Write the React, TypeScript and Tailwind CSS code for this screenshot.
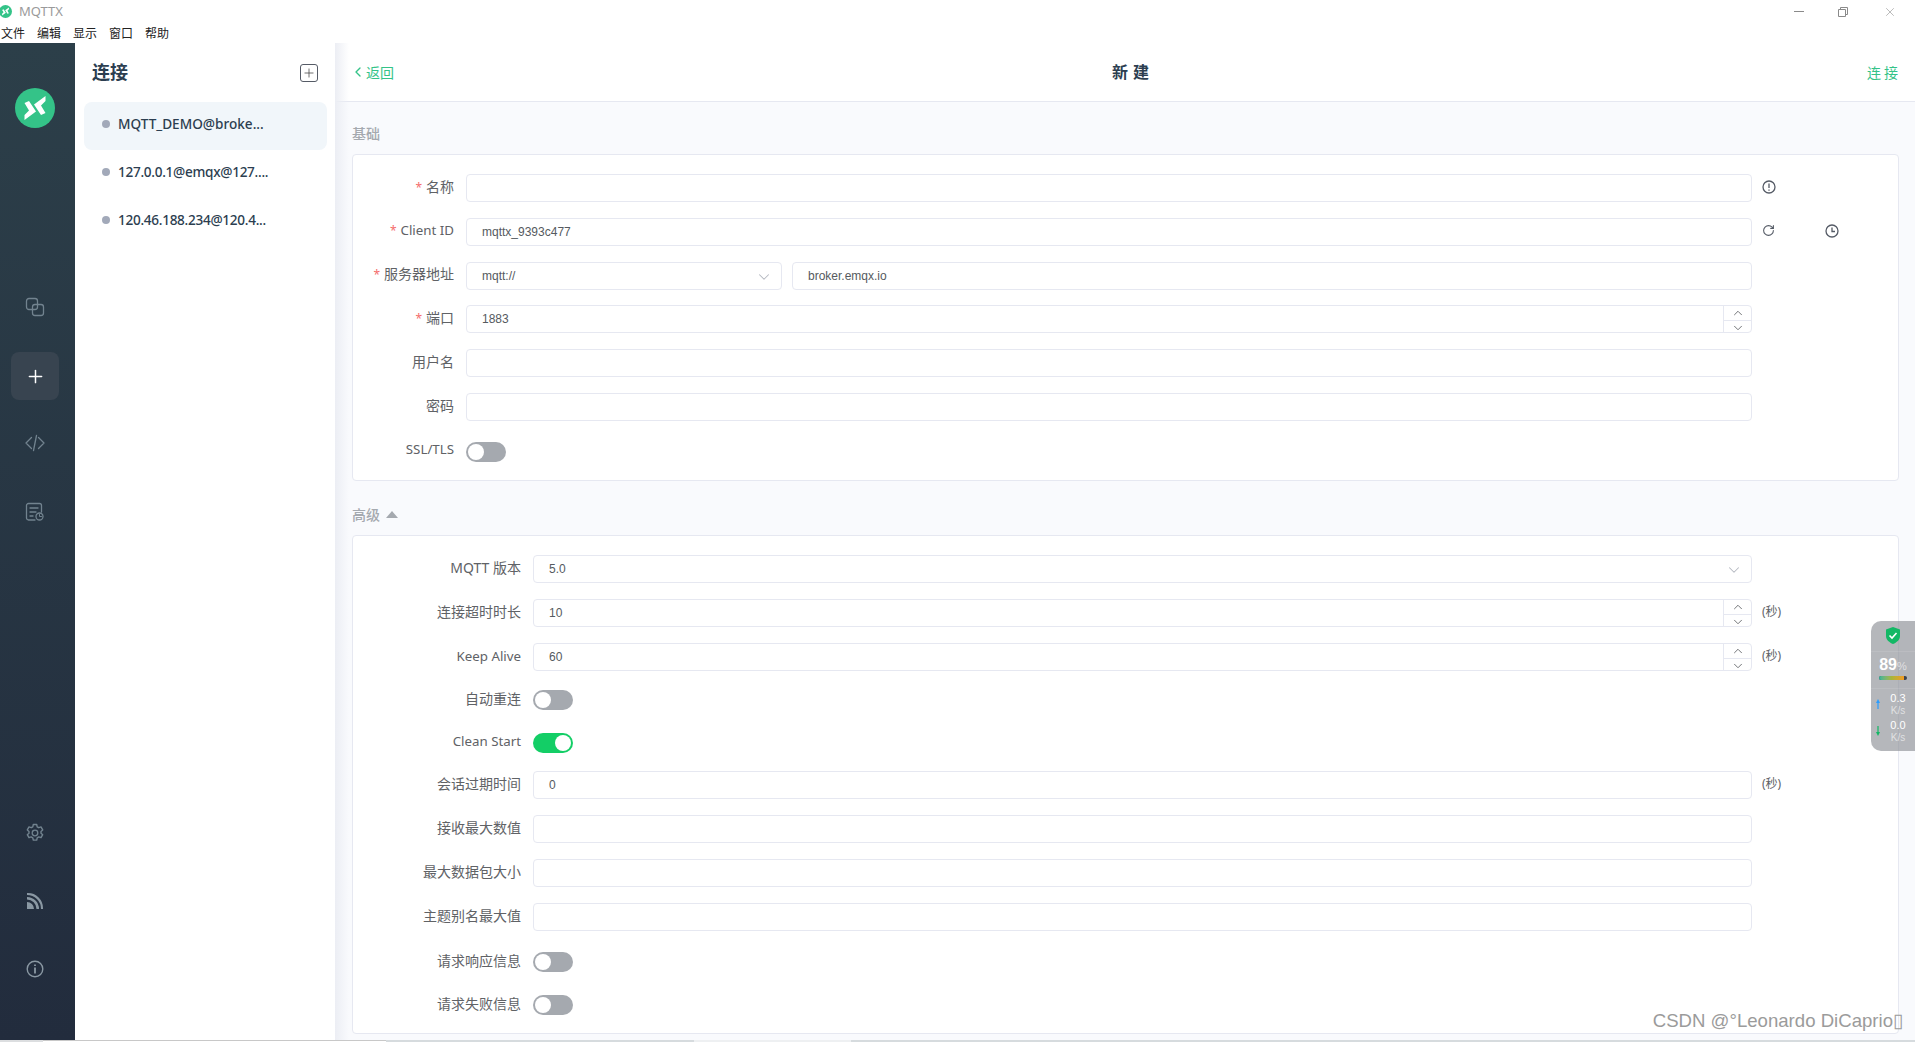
import { ChevronDown, ChevronLeft, ChevronUp, Plus, RotateCw, X } from "lucide-react"

const latin = "font-['Noto_Sans','Noto_Sans_CJK_SC',sans-serif]"
const field = "font-['Liberation_Sans','Noto_Sans_CJK_SC',sans-serif]"

function Logo({ size }: { size: number }) {
  return (
    <svg width={size} height={size} viewBox="0 0 40 40">
      <circle cx="20" cy="20" r="20" fill="#34c388" />
      <path d="M30.500 8 19 16.500 26 27l4.500-2-4.500-7.500 4.500-4.500z" fill="#fff" />
      <path d="M9.500 32 21 23.500 14 13l-4.500 2 4.500 7.500-4.500 4.500z" fill="#fff" />
    </svg>
  )
}

function NavIcon({ children }: { children: React.ReactNode }) {
  return (
    <svg width="20" height="20" viewBox="0 0 20 20" fill="none" stroke="#72838f" strokeWidth="1.3" strokeLinecap="round" strokeLinejoin="round">
      {children}
    </svg>
  )
}

function Row({ label, required, labelW, children, after, last }: { label: string; required?: boolean; labelW: string; children: React.ReactNode; after?: React.ReactNode; last?: boolean }) {
  const isLatin = /^[\x20-\x7e]+$/.test(label)
  return (
    <div className={`flex h-7 items-center ${last ? "" : "mb-[15.8px]"}`}>
      <label className={`${labelW} shrink-0 pb-[2px] pr-3 text-right leading-[26px] text-[#606266] ${isLatin ? "text-[13.3px]" : "text-[14px]"} ${latin}`}>
        {required && <span className="mr-1 text-[12px] text-[#f56c6c]">*</span>}
        {label}
      </label>
      <div className="flex min-w-0 flex-1 items-center">{children}</div>
      <div className="flex h-full w-[146px] shrink-0 items-center pb-[2px]">{after}</div>
    </div>
  )
}

function Input({ value }: { value?: string }) {
  return (
    <div className={`flex h-7 flex-1 items-center rounded border border-[#e6e8f1] bg-white pl-[15px] text-[12px] text-[#555a60] ${field}`}>
      {value}
    </div>
  )
}

function NumberInput({ value }: { value: string }) {
  return (
    <div className={`flex h-7 flex-1 items-center rounded border border-[#e6e8f1] bg-white pl-[15px] text-[12px] text-[#555a60] ${field}`}>
      <span className="flex-1">{value}</span>
      <div className="flex h-full w-[28px] flex-col border-l border-[#e6e8f1] text-[#606266]">
        <div className="flex flex-1 items-center justify-center border-b border-[#e6e8f1]">
          <ChevronUp size={14} strokeWidth={1.5} />
        </div>
        <div className="flex flex-1 items-center justify-center">
          <ChevronDown size={14} strokeWidth={1.5} />
        </div>
      </div>
    </div>
  )
}

function Select({ value, className }: { value: string; className: string }) {
  return (
    <div className={`flex h-7 items-center justify-between rounded border border-[#e6e8f1] bg-white pl-[15px] pr-[8px] text-[12px] text-[#555a60] ${field} ${className}`}>
      {value}
      <ChevronDown size={18} strokeWidth={1.4} className="mt-[2px] text-[#b4b8c0]" />
    </div>
  )
}

function Switch({ on }: { on?: boolean }) {
  return (
    <div className={`flex h-5 w-10 items-center rounded-full px-[2px] ${on ? "justify-end bg-[#13ce66]" : "justify-start bg-[#a5a9af]"}`}>
      <div className="h-4 w-4 rounded-full bg-white" />
    </div>
  )
}

function Seconds() {
  return <span className={`pl-[10px] text-[12px] text-[#606266] ${latin}`}>(秒)</span>
}

function SwitchRow({ label, labelW, on, last }: { label: string; labelW: string; on?: boolean; last?: boolean }) {
  const isLatin = /^[\x20-\x7e]+$/.test(label)
  return (
    <div className={`flex h-5 items-center ${last ? "" : "mb-[23px]"}`}>
      <label className={`${labelW} shrink-0 pb-[3px] pr-3 text-right text-[#606266] ${isLatin ? "text-[13.3px]" : "text-[14px]"} ${latin}`}>{label}</label>
      <Switch on={on} />
    </div>
  )
}

const connections = [
  { name: "MQTT_DEMO@broke...", tight: false },
  { name: "127.0.0.1@emqx@127....", tight: true },
  { name: "120.46.188.234@120.4...", tight: true },
]

export default function App() {
  return (
    <div className={`relative flex h-[1042px] w-[1915px] flex-col overflow-hidden bg-white ${latin}`}>
      {/* title bar */}
      <div className="flex h-[22px] shrink-0 items-center pt-[1px]">
        <div className="-ml-[1px] mr-[7px] flex"><Logo size={13} /></div>
        <span className="text-[13px] text-[#9a9a9a]">MQTTX</span>
        <div className="ml-auto flex items-center text-[#8a8a8a]">
          <div className="mr-[33px] h-px w-[10px] bg-[#8a8a8a]" />
          <svg width="12" height="12" viewBox="0 0 12 12" fill="none" stroke="currentColor" className="mr-[34px]">
            <path d="M1.5 3.5h7v7h-7zM3.5 3.5v-2h7v7h-2" />
          </svg>
          <X size={14} strokeWidth={1} className="mr-[18px]" />
        </div>
      </div>
      <div className="flex h-[21px] shrink-0 items-center gap-3 pl-[1px] pt-[2px] text-[12px] text-[#222]">
        <span>文件</span><span>编辑</span><span>显示</span><span>窗口</span><span>帮助</span>
      </div>

      <div className="flex min-h-0 flex-1">
        {/* sidebar */}
        <aside className="flex w-[75px] shrink-0 flex-col items-center bg-gradient-to-b from-[#2c3f49] to-[#222c3d] pb-[47px] pr-[5px] pt-[45px]">
          <Logo size={40} />
          <div className="mt-[155px] flex flex-col items-center">
            <div className="flex h-12 w-12 items-center justify-center">
              <NavIcon>
                <rect x="1.5" y="1.5" width="11" height="11" rx="2.5" />
                <rect x="7.5" y="7.5" width="11" height="11" rx="2.5" />
              </NavIcon>
            </div>
            <div className="mt-[21px] flex h-12 w-12 items-center justify-center rounded-lg bg-[#384450]">
              <Plus size={21} strokeWidth={1.7} className="text-white" />
            </div>
            <div className="mt-[19px] flex h-12 w-12 items-center justify-center">
              <NavIcon>
                <path d="M6.5 4.5 1 10l5.5 5.5M13.5 4.5 19 10l-5.5 5.5M11.5 2.5l-3 15" />
              </NavIcon>
            </div>
            <div className="mt-[21px] flex h-12 w-12 items-center justify-center">
              <NavIcon>
                <path d="M10 18H3.5a2 2 0 0 1-2-2V3.5a2 2 0 0 1 2-2h11a2 2 0 0 1 2 2V10M5 6h8M5 10h6M5 14h3" />
                <circle cx="14.5" cy="14.5" r="3.5" />
                <path d="M14.5 12.500v2h2" strokeWidth="1" />
              </NavIcon>
            </div>
          </div>
          <div className="mt-auto flex flex-col items-center gap-[20px]">
            <div className="flex h-12 w-12 items-center justify-center">
              <NavIcon>
                <path strokeWidth="1.4" d="M8.3 1.5h3.4l.5 2.3 1.6.9 2.2-.8 1.7 3-1.7 1.5v1.800l1.700 1.500-1.700 3-2.200-.8-1.600.9-.5 2.300H8.300l-.5-2.300-1.600-.9-2.200.8-1.700-3 1.700-1.500V8.400L2.300 6.900l1.700-3 2.200.8 1.600-.9z" />
                <circle cx="10" cy="10" r="2.800" />
              </NavIcon>
            </div>
            <div className="flex h-12 w-12 items-center justify-center">
              <svg width="18" height="16" viewBox="0 0 18 16" fill="#8a98a3">
                <path d="M1 16V9a7 7 0 0 1 7 7zM1 6.500V4a12 12 0 0 1 12 12h-2.500A9.500 9.500 0 0 0 1 6.500zM1 2V0h1a15 15 0 0 1 15 15v1h-2a14 14 0 0 0-14-14z" />
              </svg>
            </div>
            <div className="flex h-12 w-12 items-center justify-center">
              <svg width="18" height="18" viewBox="0 0 18 18" fill="none" stroke="#8a98a3" strokeWidth="1.400">
                <circle cx="9" cy="9" r="7.800" />
                <path d="M9 7.500v6M9 4.500v1.400" strokeWidth="1.800" />
              </svg>
            </div>
          </div>
        </aside>

        {/* connection list */}
        <section className="w-[260px] shrink-0 bg-white px-[9px]">
          <div className="flex h-[59px] items-center justify-between pl-2 pr-2">
            <h1 className="text-[18px] font-bold text-[#2c3e50]">连接</h1>
            <div className="flex h-[18px] w-[18px] items-center justify-center rounded-[3px] border border-[#555b66]">
              <Plus size={14} strokeWidth={1.3} className="text-[#444]" />
            </div>
          </div>
          <ul className="w-[243px]">
            {connections.map((c, i) => (
              <li key={c.name} className={`flex h-12 items-center gap-2 rounded-lg pb-[4px] pl-[18px] text-[13.6px] font-[500] text-[#2c3e50] ${i === 0 ? "bg-[#f1f6fa]" : ""} ${c.tight ? "tracking-[-0.3px]" : ""}`}>
                <span className="h-2 w-2 shrink-0 rounded-full bg-[#a2a9b9]" />
                {c.name}
              </li>
            ))}
          </ul>
        </section>

        {/* main */}
        <main className="relative flex min-w-0 flex-1 flex-col bg-[#f9fafd]">
          <div className="pointer-events-none absolute inset-y-0 left-0 w-[14px] bg-gradient-to-r from-[#eceef4] to-transparent" />
          <header className="flex h-[59px] shrink-0 items-center justify-between border-b border-[#e6e8f1] bg-white pl-[15px] pr-[14px]">
            <div className="flex w-[100px] items-center text-[14px] text-[#34c388]">
              <ChevronLeft size={16} strokeWidth={2} />
              返回
            </div>
            <h2 className="ml-[15px] text-[16px] font-bold tracking-[5px] text-[#2c3e50]">新建</h2>
            <div className="w-[100px] text-right text-[14px] tracking-[3px] text-[#34c388]">连接</div>
          </header>

          <div className="flex-1 pl-[17px] pr-[16px]">
            <div className="flex h-[52px] items-center pt-[10px] text-[14px] font-[500] text-[#a5a9af]">基础</div>
            <div className="mb-[17px] h-[327px] rounded-[4px] border border-[#e6e8f1] bg-white pt-[19px]">
              <Row label="名称" required labelW="w-[113px]" after={
                <svg width="14" height="14" viewBox="0 0 14 14" fill="none" stroke="#555b66" strokeWidth="1.3" className="ml-[10px]">
                  <circle cx="7" cy="7" r="6" /><path d="M7 3.500v4.500M7 9.500v1.200" />
                </svg>
              }>
                <Input />
              </Row>
              <Row label="Client ID" required labelW="w-[113px]" after={
                <>
                  <RotateCw size={13} strokeWidth={2} className="ml-[10px] text-[#555b66]" />
                  <svg width="14" height="14" viewBox="0 0 14 14" fill="none" stroke="#555b66" strokeWidth="1.3" className="ml-[50px]">
                    <circle cx="7" cy="7" r="6" /><path d="M7 3.500V7.500h3" />
                  </svg>
                </>
              }>
                <Input value="mqttx_9393c477" />
              </Row>
              <Row label="服务器地址" required labelW="w-[113px]">
                <Select value="mqtt://" className="w-[316px] shrink-0" />
                <div className="w-[10px] shrink-0" />
                <Input value="broker.emqx.io" />
              </Row>
              <Row label="端口" required labelW="w-[113px]"><NumberInput value="1883" /></Row>
              <Row label="用户名" labelW="w-[113px]"><Input /></Row>
              <Row label="密码" labelW="w-[113px]"><Input /></Row>
              <div className="pt-[5px]">
                <SwitchRow label="SSL/TLS" labelW="w-[113px]" last />
              </div>
            </div>

            <div className="flex h-[32px] items-center gap-[6px] text-[14px] font-[500] text-[#a5a9af]">
              高级
              <span className="h-0 w-0 border-x-[6px] border-b-[7px] border-x-transparent border-b-[#a5a9af]" />
            </div>
            <div className="mt-[5px] h-[499px] rounded-[4px] border border-[#e6e8f1] bg-white pt-[19px]">
              <Row label="MQTT 版本" labelW="w-[180px]"><Select value="5.0" className="flex-1" /></Row>
              <Row label="连接超时时长" labelW="w-[180px]" after={<Seconds />}><NumberInput value="10" /></Row>
              <Row label="Keep Alive" labelW="w-[180px]" after={<Seconds />}><NumberInput value="60" /></Row>
              <div className="pt-[4px]">
                <SwitchRow label="自动重连" labelW="w-[180px]" />
                <SwitchRow label="Clean Start" labelW="w-[180px]" on />
              </div>
              <div className="-mt-[5px]" />
              <Row label="会话过期时间" labelW="w-[180px]" after={<Seconds />}><Input value="0" /></Row>
              <Row label="接收最大数值" labelW="w-[180px]"><Input /></Row>
              <Row label="最大数据包大小" labelW="w-[180px]"><Input /></Row>
              <Row label="主题别名最大值" labelW="w-[180px]"><Input /></Row>
              <div className="pt-[5px]">
                <SwitchRow label="请求响应信息" labelW="w-[180px]" />
                <SwitchRow label="请求失败信息" labelW="w-[180px]" last />
              </div>
            </div>
          </div>
        </main>
      </div>

      {/* window scroll strip */}
      <div className="flex h-[2px] shrink-0">
        <div className="w-[43px] bg-[#dcdee0]" />
        <div className="w-[343px] border-t border-[#c8c8c8] bg-white" />
        <div className="w-[308px] bg-[#d6dbde]" />
        <div className="w-[157px] bg-[#eef0f2]" />
        <div className="flex-1 bg-[#d6dbde]" />
      </div>

      {/* system monitor widget */}
      <div className="absolute right-0 top-[621px] flex h-[130px] w-[44px] flex-col items-center rounded-l-[10px] bg-[#8e9197]/65 pt-[6px] text-white">
        <svg width="14" height="17" viewBox="0 0 14 17">
          <path d="M7 0 14 2.500V9c0 4-3.500 6.500-7 8-3.500-1.500-7-4-7-8V2.500z" fill="#13b865" />
          <path d="M3.500 8.500l2.500 2.500 4.500-5" fill="none" stroke="#fff" strokeWidth="1.6" />
        </svg>
        <div className="mt-[7px] h-px w-full bg-white/10" />
        <div className={`mt-[3px] flex items-baseline text-[16px] font-bold leading-[20px] ${field}`}>
          89<span className="text-[11px] font-normal text-white/60">%</span>
        </div>
        <div className="flex h-[4px] w-[28px] overflow-hidden rounded-full bg-[#3d4450]">
          <div className="h-full w-[25px] bg-gradient-to-r from-[#2bb39b] via-[#a8b53a] to-[#f09a25]" />
        </div>
        <div className="mt-[8px] h-px w-full bg-white/10" />
        <div className={`flex w-full flex-col pl-[5px] pt-[3px] ${field}`}>
          <div className="flex items-center gap-[1px]">
            <svg width="4" height="10" viewBox="0 0 4 10" fill="#2b9dff"><path d="M2 0l2 4H2.600v6H1.400V4H0z" /></svg>
            <div className="flex-1 text-center text-[11px] leading-[13px]">0.3<div className="text-[10px] leading-[11px] text-white/60">K/s</div></div>
          </div>
          <div className="mt-[3px] flex items-center gap-[1px]">
            <svg width="4" height="10" viewBox="0 0 4 10" fill="#13b865"><path d="M2 10l2-4H2.600V0H1.400v6H0z" /></svg>
            <div className="flex-1 text-center text-[11px] leading-[13px]">0.0<div className="text-[10px] leading-[11px] text-white/60">K/s</div></div>
          </div>
        </div>
      </div>

      {/* watermark */}
      <div className={`absolute bottom-[11px] right-[12px] text-[18.6px] leading-[20px] text-[#9b9b9b] ${field}`}>CSDN @°Leonardo DiCaprio▯</div>
    </div>
  )
}
